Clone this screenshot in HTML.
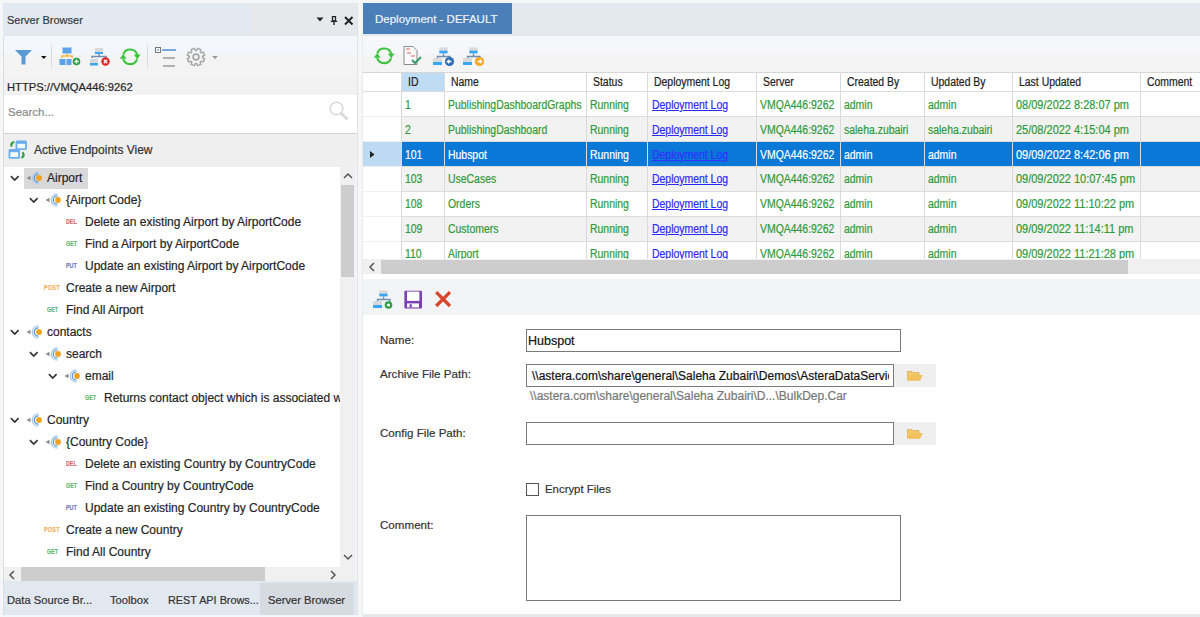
<!DOCTYPE html><html><head><meta charset="utf-8"><style>
*{box-sizing:border-box;margin:0;padding:0}
html,body{width:1200px;height:617px;overflow:hidden;background:#f5f6f7;font-family:"Liberation Sans",sans-serif;color:#262626;position:relative}
.a{position:absolute}
.t{position:absolute;white-space:nowrap;line-height:14px;-webkit-text-stroke:0.2px currentColor}
svg{position:absolute;overflow:visible}
</style></head><body><div class="a" style="left:3px;top:3px;width:354px;height:612px;background:#f3f5f8;"></div>
<div class="a" style="left:3px;top:3px;width:354px;height:33px;background:#e3e9f0;"></div>
<div class="a" style="left:250px;top:3px;width:107px;height:33px;background:#e6e8ec;"></div>
<div class="t" style="left:7px;top:13px;font-size:11px;color:#3a3a3a;">Server Browser</div>
<svg style="left:316px;top:17px" width="8" height="5"><polygon points="0.5,0.5 7.5,0.5 4,4.5" fill="#222"/></svg>
<svg style="left:330px;top:16px" width="8" height="10"><path d="M2.5,0.6H5.5V5H2.5Z" stroke="#222" stroke-width="1.3" fill="none"/><path d="M0.8,5.4H7.2M4,5.4V9" stroke="#222" stroke-width="1.4" fill="none"/></svg>
<svg style="left:344px;top:16px" width="10" height="10"><path d="M1,1L8.5,8.5M8.5,1L1,8.5" stroke="#222" stroke-width="2" fill="none"/></svg>
<div class="a" style="left:3px;top:36px;width:354px;height:42px;background:linear-gradient(#f3f6fa 0,#f3f6fa 42%,#f4f4f5 42%,#f3f3f4 100%);"></div>
<svg style="left:15px;top:50px" width="18" height="15"><path d="M0,0H17L10.5,6.5V14.5H6.5V6.5Z" fill="#5b9bd5"/></svg>
<svg style="left:41px;top:56px" width="6" height="3"><polygon points="0,0 5.5,0 2.75,3" fill="#111"/></svg>
<div class="a" style="left:51px;top:45px;width:1px;height:23px;background:#d9dde2;"></div>
<svg style="left:59px;top:47px" width="22" height="19">
<rect x="3.5" y="0.5" width="9" height="6" fill="#5ba3e8"/>
<path d="M3,11V9H13V11M8,6.5V9" stroke="#f2b63c" stroke-width="1.6" fill="none"/>
<rect x="0.5" y="12" width="6" height="6" fill="#5ba3e8"/><rect x="7.5" y="12" width="5" height="6" fill="#5ba3e8"/>
<circle cx="17.5" cy="14.5" r="3.8" fill="#2ea043"/><path d="M15.5,14.5H19.5M17.5,12.5V16.5" stroke="#fff" stroke-width="1.3"/>
</svg>
<svg style="left:89px;top:47px" width="22" height="20">
<rect x="6" y="1" width="8" height="4" fill="#d8d8d8"/><rect x="6" y="5" width="8" height="2" fill="#3ba7f0"/>
<path d="M10,7V9.5M3,11V9.5H17V11" stroke="#6f8fb0" stroke-width="1.4" fill="none"/>
<rect x="1" y="12" width="8" height="4" fill="#d8d8d8"/><rect x="1" y="16" width="8" height="2.5" fill="#3ba7f0"/>
<circle cx="16.5" cy="14.5" r="4.2" fill="#e02424"/><path d="M14.8,12.8L18.2,16.2M18.2,12.8L14.8,16.2" stroke="#fff" stroke-width="1.3"/>
</svg>
<svg style="left:120px;top:48px" width="21" height="18"><path d="M3.34,6.3A7.3,7.3 0 0 1 17.25,6.91" stroke="#3ec43e" stroke-width="2.1" fill="none"/><path d="M17.06,11.3A7.3,7.3 0 0 1 3.15,10.69" stroke="#3ec43e" stroke-width="2.1" fill="none"/>
<polygon points="13.8,6.6 20.6,6.6 17.2,11.4" fill="#3ec43e"/><polygon points="-0.2,10.8 6.6,10.8 3.2,6" fill="#3ec43e"/></svg>
<div class="a" style="left:147px;top:45px;width:1px;height:23px;background:#d9dde2;"></div>
<svg style="left:155px;top:47px" width="22" height="20">
<rect x="0.5" y="0.5" width="5" height="5" fill="#fff" stroke="#777" stroke-width="1"/><path d="M2,3H4" stroke="#3a7fd0" stroke-width="1"/>
<path d="M7,3H21" stroke="#3a7fd0" stroke-width="1.3"/><path d="M8,11H20M8,19H20" stroke="#9a9a9a" stroke-width="1.3"/>
</svg>
<svg style="left:186px;top:47px" width="20" height="20" viewBox="-10 -10 20 20">
<path d="M6.31,-1.93L8.64,-1.68L8.64,1.68L6.31,1.93L5.83,3.10L7.30,4.92L4.92,7.30L3.10,5.83L1.93,6.31L1.68,8.64L-1.68,8.64L-1.93,6.31L-3.10,5.83L-4.92,7.30L-7.30,4.92L-5.83,3.10L-6.31,1.93L-8.64,1.68L-8.64,-1.68L-6.31,-1.93L-5.83,-3.10L-7.30,-4.92L-4.92,-7.30L-3.10,-5.83L-1.93,-6.31L-1.68,-8.64L1.68,-8.64L1.93,-6.31L3.10,-5.83L4.92,-7.30L7.30,-4.92L5.83,-3.10Z" fill="none" stroke="#a6a6a6" stroke-width="1.5" stroke-linejoin="round" transform="rotate(22.5)"/>
<circle cx="0" cy="0" r="2.9" fill="none" stroke="#a6a6a6" stroke-width="1.7"/></svg>
<svg style="left:212px;top:56px" width="7" height="3"><polygon points="0,0 6,0 3,3" fill="#999"/></svg>
<div class="a" style="left:3px;top:78px;width:354px;height:17px;background:#f2f2f3;"></div>
<div class="t" style="left:7px;top:80px;font-size:11.2px;color:#262626;">HTTPS://VMQA446:9262</div>
<div class="a" style="left:3px;top:95px;width:354px;height:38px;background:#fff;"></div>
<div class="a" style="left:3px;top:133px;width:354px;height:1px;background:#d2d2d2;"></div>
<div class="t" style="left:8px;top:105px;font-size:11.5px;color:#8a8a8a;">Search...</div>
<svg style="left:328px;top:100px" width="22" height="22"><circle cx="8.5" cy="8.5" r="6.3" fill="none" stroke="#d8d8d8" stroke-width="1.6"/><path d="M13,13L19.5,19.5" stroke="#d8d8d8" stroke-width="2.8"/></svg>
<div class="a" style="left:3px;top:134px;width:354px;height:33px;background:#efefef;"></div>
<svg style="left:8px;top:140px" width="20" height="20">
<rect x="7.6" y="0.6" width="11.4" height="9.5" rx="1.6" fill="#6aaef0"/><rect x="9.4" y="3.8" width="7.8" height="4.5" fill="#f4f8fc"/>
<rect x="0.6" y="9" width="11.4" height="9.8" rx="1.6" fill="#6aaef0"/><rect x="2.4" y="12.2" width="7.8" height="4.8" fill="#f4f8fc"/>
<path d="M5.5,2.2Q2.6,3.2 3.4,5.8" stroke="#3a9e4a" stroke-width="2.2" fill="none" stroke-linecap="round"/>
<path d="M15,13Q16.6,15.6 14.2,17.4" stroke="#3a9e4a" stroke-width="2.2" fill="none" stroke-linecap="round"/>
</svg>
<div class="t" style="left:34px;top:143px;font-size:12px;color:#333;">Active Endpoints View</div>
<div class="a" style="left:3px;top:167px;width:337px;height:400px;background:#fff;"></div>
<div class="a" style="left:3px;top:167px;width:337px;height:400px;overflow:hidden">
<div class="a" style="left:21px;top:1px;width:64px;height:21px;background:#d9d9d9"></div>
<svg style="left:7px;top:8px" width="10" height="7"><path d="M0.9,1.2L4.75,5L8.6,1.2" stroke="#333" stroke-width="1.7" fill="none"/></svg>
<svg style="left:23px;top:4px" width="17" height="14"><polygon points="0.5,7 4.5,4.8 4.5,9.2" fill="#8a8a8a"/>
<path d="M12.5,0.8A6.2,6.2 0 0 0 12.5,13.2" stroke="#a9c9ec" stroke-width="1.3" fill="none"/>
<path d="M12.5,2.8A4.2,4.2 0 0 0 12.5,11.2" stroke="#5b98d8" stroke-width="1.3" fill="none"/>
<circle cx="13" cy="7" r="2.9" fill="#f0a21e"/></svg>
<div class="t" style="left:44px;top:4px;font-size:12px;color:#262626">Airport</div>
<svg style="left:26px;top:30px" width="10" height="7"><path d="M0.9,1.2L4.75,5L8.6,1.2" stroke="#333" stroke-width="1.7" fill="none"/></svg>
<svg style="left:42px;top:26px" width="17" height="14"><polygon points="0.5,7 4.5,4.8 4.5,9.2" fill="#8a8a8a"/>
<path d="M12.5,0.8A6.2,6.2 0 0 0 12.5,13.2" stroke="#a9c9ec" stroke-width="1.3" fill="none"/>
<path d="M12.5,2.8A4.2,4.2 0 0 0 12.5,11.2" stroke="#5b98d8" stroke-width="1.3" fill="none"/>
<circle cx="13" cy="7" r="2.9" fill="#f0a21e"/></svg>
<div class="t" style="left:63px;top:26px;font-size:12px;color:#262626">{Airport Code}</div>
<div class="t" style="left:63px;top:51px;font-size:7px;line-height:7px;font-weight:bold;color:#d2404a;opacity:0.8;letter-spacing:0px;transform:scaleX(0.76);transform-origin:0 0">DEL</div>
<div class="t" style="left:82px;top:48px;font-size:12px;color:#262626">Delete an existing Airport by AirportCode</div>
<div class="t" style="left:63px;top:73px;font-size:7px;line-height:7px;font-weight:bold;color:#3ea64a;opacity:0.8;letter-spacing:0px;transform:scaleX(0.76);transform-origin:0 0">GET</div>
<div class="t" style="left:82px;top:70px;font-size:12px;color:#262626">Find a Airport by AirportCode</div>
<div class="t" style="left:63px;top:95px;font-size:7px;line-height:7px;font-weight:bold;color:#4a58b0;opacity:0.8;letter-spacing:0px;transform:scaleX(0.76);transform-origin:0 0">PUT</div>
<div class="t" style="left:82px;top:92px;font-size:12px;color:#262626">Update an existing Airport by AirportCode</div>
<div class="t" style="left:41px;top:117px;font-size:7px;line-height:7px;font-weight:bold;color:#f09a30;opacity:0.8;letter-spacing:0.4px;transform:scaleX(0.76);transform-origin:0 0">POST</div>
<div class="t" style="left:63px;top:114px;font-size:12px;color:#262626">Create a new Airport</div>
<div class="t" style="left:44px;top:139px;font-size:7px;line-height:7px;font-weight:bold;color:#3ea64a;opacity:0.8;letter-spacing:0px;transform:scaleX(0.76);transform-origin:0 0">GET</div>
<div class="t" style="left:63px;top:136px;font-size:12px;color:#262626">Find All Airport</div>
<svg style="left:7px;top:162px" width="10" height="7"><path d="M0.9,1.2L4.75,5L8.6,1.2" stroke="#333" stroke-width="1.7" fill="none"/></svg>
<svg style="left:23px;top:158px" width="17" height="14"><polygon points="0.5,7 4.5,4.8 4.5,9.2" fill="#8a8a8a"/>
<path d="M12.5,0.8A6.2,6.2 0 0 0 12.5,13.2" stroke="#a9c9ec" stroke-width="1.3" fill="none"/>
<path d="M12.5,2.8A4.2,4.2 0 0 0 12.5,11.2" stroke="#5b98d8" stroke-width="1.3" fill="none"/>
<circle cx="13" cy="7" r="2.9" fill="#f0a21e"/></svg>
<div class="t" style="left:44px;top:158px;font-size:12px;color:#262626">contacts</div>
<svg style="left:26px;top:184px" width="10" height="7"><path d="M0.9,1.2L4.75,5L8.6,1.2" stroke="#333" stroke-width="1.7" fill="none"/></svg>
<svg style="left:42px;top:180px" width="17" height="14"><polygon points="0.5,7 4.5,4.8 4.5,9.2" fill="#8a8a8a"/>
<path d="M12.5,0.8A6.2,6.2 0 0 0 12.5,13.2" stroke="#a9c9ec" stroke-width="1.3" fill="none"/>
<path d="M12.5,2.8A4.2,4.2 0 0 0 12.5,11.2" stroke="#5b98d8" stroke-width="1.3" fill="none"/>
<circle cx="13" cy="7" r="2.9" fill="#f0a21e"/></svg>
<div class="t" style="left:63px;top:180px;font-size:12px;color:#262626">search</div>
<svg style="left:45px;top:206px" width="10" height="7"><path d="M0.9,1.2L4.75,5L8.6,1.2" stroke="#333" stroke-width="1.7" fill="none"/></svg>
<svg style="left:61px;top:202px" width="17" height="14"><polygon points="0.5,7 4.5,4.8 4.5,9.2" fill="#8a8a8a"/>
<path d="M12.5,0.8A6.2,6.2 0 0 0 12.5,13.2" stroke="#a9c9ec" stroke-width="1.3" fill="none"/>
<path d="M12.5,2.8A4.2,4.2 0 0 0 12.5,11.2" stroke="#5b98d8" stroke-width="1.3" fill="none"/>
<circle cx="13" cy="7" r="2.9" fill="#f0a21e"/></svg>
<div class="t" style="left:82px;top:202px;font-size:12px;color:#262626">email</div>
<div class="t" style="left:82px;top:227px;font-size:7px;line-height:7px;font-weight:bold;color:#3ea64a;opacity:0.8;letter-spacing:0px;transform:scaleX(0.76);transform-origin:0 0">GET</div>
<div class="t" style="left:101px;top:224px;font-size:12px;color:#262626">Returns contact object which is associated with the email</div>
<svg style="left:7px;top:250px" width="10" height="7"><path d="M0.9,1.2L4.75,5L8.6,1.2" stroke="#333" stroke-width="1.7" fill="none"/></svg>
<svg style="left:23px;top:246px" width="17" height="14"><polygon points="0.5,7 4.5,4.8 4.5,9.2" fill="#8a8a8a"/>
<path d="M12.5,0.8A6.2,6.2 0 0 0 12.5,13.2" stroke="#a9c9ec" stroke-width="1.3" fill="none"/>
<path d="M12.5,2.8A4.2,4.2 0 0 0 12.5,11.2" stroke="#5b98d8" stroke-width="1.3" fill="none"/>
<circle cx="13" cy="7" r="2.9" fill="#f0a21e"/></svg>
<div class="t" style="left:44px;top:246px;font-size:12px;color:#262626">Country</div>
<svg style="left:26px;top:272px" width="10" height="7"><path d="M0.9,1.2L4.75,5L8.6,1.2" stroke="#333" stroke-width="1.7" fill="none"/></svg>
<svg style="left:42px;top:268px" width="17" height="14"><polygon points="0.5,7 4.5,4.8 4.5,9.2" fill="#8a8a8a"/>
<path d="M12.5,0.8A6.2,6.2 0 0 0 12.5,13.2" stroke="#a9c9ec" stroke-width="1.3" fill="none"/>
<path d="M12.5,2.8A4.2,4.2 0 0 0 12.5,11.2" stroke="#5b98d8" stroke-width="1.3" fill="none"/>
<circle cx="13" cy="7" r="2.9" fill="#f0a21e"/></svg>
<div class="t" style="left:63px;top:268px;font-size:12px;color:#262626">{Country Code}</div>
<div class="t" style="left:63px;top:293px;font-size:7px;line-height:7px;font-weight:bold;color:#d2404a;opacity:0.8;letter-spacing:0px;transform:scaleX(0.76);transform-origin:0 0">DEL</div>
<div class="t" style="left:82px;top:290px;font-size:12px;color:#262626">Delete an existing Country by CountryCode</div>
<div class="t" style="left:63px;top:315px;font-size:7px;line-height:7px;font-weight:bold;color:#3ea64a;opacity:0.8;letter-spacing:0px;transform:scaleX(0.76);transform-origin:0 0">GET</div>
<div class="t" style="left:82px;top:312px;font-size:12px;color:#262626">Find a Country by CountryCode</div>
<div class="t" style="left:63px;top:337px;font-size:7px;line-height:7px;font-weight:bold;color:#4a58b0;opacity:0.8;letter-spacing:0px;transform:scaleX(0.76);transform-origin:0 0">PUT</div>
<div class="t" style="left:82px;top:334px;font-size:12px;color:#262626">Update an existing Country by CountryCode</div>
<div class="t" style="left:41px;top:359px;font-size:7px;line-height:7px;font-weight:bold;color:#f09a30;opacity:0.8;letter-spacing:0.4px;transform:scaleX(0.76);transform-origin:0 0">POST</div>
<div class="t" style="left:63px;top:356px;font-size:12px;color:#262626">Create a new Country</div>
<div class="t" style="left:44px;top:381px;font-size:7px;line-height:7px;font-weight:bold;color:#3ea64a;opacity:0.8;letter-spacing:0px;transform:scaleX(0.76);transform-origin:0 0">GET</div>
<div class="t" style="left:63px;top:378px;font-size:12px;color:#262626">Find All Country</div>
</div>
<div class="a" style="left:340px;top:167px;width:15px;height:400px;background:#f0f0f0;"></div>
<div class="a" style="left:341px;top:185px;width:13px;height:92px;background:#cdcdcd;"></div>
<svg style="left:343px;top:173px" width="10" height="6"><path d="M1,5L5,1L9,5" stroke="#555" stroke-width="1.5" fill="none"/></svg>
<svg style="left:343px;top:554px" width="10" height="6"><path d="M1,1L5,5L9,1" stroke="#555" stroke-width="1.5" fill="none"/></svg>
<div class="a" style="left:3px;top:567px;width:352px;height:14px;background:#f0f0f0;"></div>
<div class="a" style="left:21px;top:567px;width:244px;height:14px;background:#cdcdcd;"></div>
<svg style="left:9px;top:570px" width="6" height="10"><path d="M5,1L1,5L5,9" stroke="#555" stroke-width="1.5" fill="none"/></svg>
<svg style="left:330px;top:570px" width="6" height="10"><path d="M1,1L5,5L1,9" stroke="#555" stroke-width="1.5" fill="none"/></svg>
<div class="a" style="left:3px;top:581px;width:354px;height:34px;background:#e2e8ef;"></div>
<div class="a" style="left:260px;top:583px;width:94px;height:32px;background:#d6dbe1;"></div>
<div class="t" style="left:7px;top:593px;font-size:11.2px;color:#333;">Data Source Br...</div>
<div class="t" style="left:110px;top:593px;font-size:11.2px;color:#333;">Toolbox</div>
<div class="t" style="left:168px;top:593px;font-size:10.85px;color:#333;">REST API Brows...</div>
<div class="t" style="left:268px;top:593px;font-size:11.2px;color:#333;">Server Browser</div>
<div class="a" style="left:3px;top:36px;width:1px;height:579px;background:#dcdde0;"></div>
<div class="a" style="left:357px;top:3px;width:1px;height:612px;background:#e2e4e7;"></div>
<div class="a" style="left:362px;top:36px;width:1px;height:579px;background:#e8eaed;"></div>
<div class="a" style="left:363px;top:3px;width:837px;height:612px;background:#fff;"></div>
<div class="a" style="left:363px;top:3px;width:837px;height:33px;background:#e4e9f0;"></div>
<div class="a" style="left:363px;top:3px;width:149px;height:31px;background:#4a7fb9;"></div>
<div class="t" style="left:375px;top:12px;font-size:11.5px;color:#eef3f9;">Deployment - DEFAULT</div>
<div class="a" style="left:363px;top:36px;width:837px;height:36px;background:linear-gradient(#f5f7fa 0,#f5f7fa 50%,#f4f4f5 50%,#f4f4f5 100%);"></div>
<svg style="left:374px;top:47px" width="21" height="18"><path d="M3.34,6.3A7.3,7.3 0 0 1 17.25,6.91" stroke="#3ec43e" stroke-width="2.1" fill="none"/><path d="M17.06,11.3A7.3,7.3 0 0 1 3.15,10.69" stroke="#3ec43e" stroke-width="2.1" fill="none"/>
<polygon points="13.8,6.6 20.6,6.6 17.2,11.4" fill="#3ec43e"/><polygon points="-0.2,10.8 6.6,10.8 3.2,6" fill="#3ec43e"/></svg>
<svg style="left:403px;top:46px" width="20" height="20">
<path d="M1,0.5H10L14,4.5V18.5H1Z" fill="#fafafa" stroke="#8a8a8a" stroke-width="1"/><path d="M3,3H7M4,7H8M8,10H12" stroke="#e06050" stroke-width="1"/>
<path d="M9,14L12,17L18,11" stroke="#3a9a6a" stroke-width="2" fill="none"/></svg>
<svg style="left:433px;top:47px" width="20" height="20"><rect x="6.3" y="0.4" width="8.3" height="3.2" fill="#d9d9d9"/><rect x="6.3" y="3.6" width="8.3" height="2.8" fill="#3aa6f2"/>
<path d="M10.5,6.4V9.5M4.5,11V9.5H17V12" stroke="#6f8fb0" stroke-width="1.4" fill="none"/>
<rect x="0" y="11" width="9" height="4" fill="#d9d9d9"/><rect x="0" y="15" width="9" height="3" fill="#3aa6f2"/><circle cx="16.5" cy="14.5" r="4.6" fill="#2f6db5"/><path d="M18.5,14.5H14.5M16.2,12.7L14.4,14.5L16.2,16.3" stroke="#fff" stroke-width="1.3" fill="none"/></svg>
<svg style="left:463px;top:47px" width="20" height="20"><rect x="6.3" y="0.4" width="8.3" height="3.2" fill="#d9d9d9"/><rect x="6.3" y="3.6" width="8.3" height="2.8" fill="#3aa6f2"/>
<path d="M10.5,6.4V9.5M4.5,11V9.5H17V12" stroke="#6f8fb0" stroke-width="1.4" fill="none"/>
<rect x="0" y="11" width="9" height="4" fill="#d9d9d9"/><rect x="0" y="15" width="9" height="3" fill="#3aa6f2"/><circle cx="16.5" cy="14.5" r="4.6" fill="#f5a623"/><path d="M14.5,14.5H18.5M16.8,12.7L18.6,14.5L16.8,16.3" stroke="#fff" stroke-width="1.3" fill="none"/></svg>
<div class="a" style="left:363px;top:72px;width:837px;height:187px;overflow:hidden;background:#fff">
<div class="a" style="left:0px;top:0px;width:837px;height:1px;background:#d6d6d6;"></div>
<div class="a" style="left:38px;top:1px;width:43px;height:18px;background:#bfdcf5;"></div>
<div class="a" style="left:38px;top:44px;width:837px;height:1px;background:#dcdcdc;"></div>
<div class="a" style="left:0px;top:44px;width:38px;height:1px;background:#f0f0f0;"></div>
<div class="a" style="left:38px;top:45px;width:837px;height:25px;background:#f2f2f2;"></div>
<div class="a" style="left:38px;top:69px;width:837px;height:1px;background:#dcdcdc;"></div>
<div class="a" style="left:0px;top:69px;width:38px;height:1px;background:#f0f0f0;"></div>
<div class="a" style="left:38px;top:70px;width:837px;height:25px;background:#0a78d7;"></div>
<div class="a" style="left:0px;top:70px;width:38px;height:25px;background:#bcdaf3;"></div>
<div class="a" style="left:38px;top:94px;width:837px;height:1px;background:#dcdcdc;"></div>
<div class="a" style="left:0px;top:94px;width:38px;height:1px;background:#f0f0f0;"></div>
<div class="a" style="left:38px;top:95px;width:837px;height:25px;background:#f2f2f2;"></div>
<div class="a" style="left:38px;top:119px;width:837px;height:1px;background:#dcdcdc;"></div>
<div class="a" style="left:0px;top:119px;width:38px;height:1px;background:#f0f0f0;"></div>
<div class="a" style="left:38px;top:144px;width:837px;height:1px;background:#dcdcdc;"></div>
<div class="a" style="left:0px;top:144px;width:38px;height:1px;background:#f0f0f0;"></div>
<div class="a" style="left:38px;top:145px;width:837px;height:25px;background:#f2f2f2;"></div>
<div class="a" style="left:38px;top:169px;width:837px;height:1px;background:#dcdcdc;"></div>
<div class="a" style="left:0px;top:169px;width:38px;height:1px;background:#f0f0f0;"></div>
<div class="a" style="left:38px;top:194px;width:837px;height:1px;background:#dcdcdc;"></div>
<div class="a" style="left:0px;top:194px;width:38px;height:1px;background:#f0f0f0;"></div>
<div class="a" style="left:0px;top:19px;width:837px;height:1px;background:#dcdcdc;"></div>
<div class="a" style="left:38px;top:0px;width:1px;height:187px;background:#dadada;"></div>
<div class="a" style="left:81px;top:0px;width:1px;height:187px;background:#dadada;"></div>
<div class="a" style="left:223px;top:0px;width:1px;height:187px;background:#dadada;"></div>
<div class="a" style="left:284px;top:0px;width:1px;height:187px;background:#dadada;"></div>
<div class="a" style="left:393px;top:0px;width:1px;height:187px;background:#dadada;"></div>
<div class="a" style="left:477px;top:0px;width:1px;height:187px;background:#dadada;"></div>
<div class="a" style="left:561px;top:0px;width:1px;height:187px;background:#dadada;"></div>
<div class="a" style="left:649px;top:0px;width:1px;height:187px;background:#dadada;"></div>
<div class="a" style="left:777px;top:0px;width:1px;height:187px;background:#dadada;"></div>
<div class="t" style="left:45px;top:3px;font-size:12px;color:#222;transform:scaleX(0.87);transform-origin:0 0">ID</div>
<div class="t" style="left:88px;top:3px;font-size:12px;color:#222;transform:scaleX(0.87);transform-origin:0 0">Name</div>
<div class="t" style="left:230px;top:3px;font-size:12px;color:#222;transform:scaleX(0.87);transform-origin:0 0">Status</div>
<div class="t" style="left:291px;top:3px;font-size:12px;color:#222;transform:scaleX(0.87);transform-origin:0 0">Deployment Log</div>
<div class="t" style="left:400px;top:3px;font-size:12px;color:#222;transform:scaleX(0.87);transform-origin:0 0">Server</div>
<div class="t" style="left:484px;top:3px;font-size:12px;color:#222;transform:scaleX(0.87);transform-origin:0 0">Created By</div>
<div class="t" style="left:568px;top:3px;font-size:12px;color:#222;transform:scaleX(0.87);transform-origin:0 0">Updated By</div>
<div class="t" style="left:656px;top:3px;font-size:12px;color:#222;transform:scaleX(0.87);transform-origin:0 0">Last Updated</div>
<div class="t" style="left:784px;top:3px;font-size:12px;color:#222;transform:scaleX(0.87);transform-origin:0 0">Comment</div>
<div class="t" style="left:42px;top:26px;font-size:12px;color:#2e9a3a;transform:scaleX(0.87);transform-origin:0 0">1</div>
<div class="t" style="left:85px;top:26px;font-size:12px;color:#2e9a3a;transform:scaleX(0.87);transform-origin:0 0">PublishingDashboardGraphs</div>
<div class="t" style="left:227px;top:26px;font-size:12px;color:#2e9a3a;transform:scaleX(0.87);transform-origin:0 0">Running</div>
<div class="t" style="left:289px;top:26px;font-size:12px;color:#2a2aff;transform:scaleX(0.87);transform-origin:0 0"><u>Deployment Log</u></div>
<div class="t" style="left:397px;top:26px;font-size:12px;color:#2e9a3a;transform:scaleX(0.87);transform-origin:0 0">VMQA446:9262</div>
<div class="t" style="left:481px;top:26px;font-size:12px;color:#2e9a3a;transform:scaleX(0.87);transform-origin:0 0">admin</div>
<div class="t" style="left:565px;top:26px;font-size:12px;color:#2e9a3a;transform:scaleX(0.87);transform-origin:0 0">admin</div>
<div class="t" style="left:653px;top:26px;font-size:12px;color:#2e9a3a;transform:scaleX(0.915);transform-origin:0 0">08/09/2022 8:28:07 pm</div>
<div class="t" style="left:42px;top:51px;font-size:12px;color:#2e9a3a;transform:scaleX(0.87);transform-origin:0 0">2</div>
<div class="t" style="left:85px;top:51px;font-size:12px;color:#2e9a3a;transform:scaleX(0.87);transform-origin:0 0">PublishingDashboard</div>
<div class="t" style="left:227px;top:51px;font-size:12px;color:#2e9a3a;transform:scaleX(0.87);transform-origin:0 0">Running</div>
<div class="t" style="left:289px;top:51px;font-size:12px;color:#2a2aff;transform:scaleX(0.87);transform-origin:0 0"><u>Deployment Log</u></div>
<div class="t" style="left:397px;top:51px;font-size:12px;color:#2e9a3a;transform:scaleX(0.87);transform-origin:0 0">VMQA446:9262</div>
<div class="t" style="left:481px;top:51px;font-size:12px;color:#2e9a3a;transform:scaleX(0.87);transform-origin:0 0">saleha.zubairi</div>
<div class="t" style="left:565px;top:51px;font-size:12px;color:#2e9a3a;transform:scaleX(0.87);transform-origin:0 0">saleha.zubairi</div>
<div class="t" style="left:653px;top:51px;font-size:12px;color:#2e9a3a;transform:scaleX(0.915);transform-origin:0 0">25/08/2022 4:15:04 pm</div>
<div class="t" style="left:42px;top:76px;font-size:12px;color:#ffffff;transform:scaleX(0.87);transform-origin:0 0">101</div>
<div class="t" style="left:85px;top:76px;font-size:12px;color:#ffffff;transform:scaleX(0.87);transform-origin:0 0">Hubspot</div>
<div class="t" style="left:227px;top:76px;font-size:12px;color:#ffffff;transform:scaleX(0.87);transform-origin:0 0">Running</div>
<div class="t" style="left:289px;top:76px;font-size:12px;color:#3030ff;transform:scaleX(0.87);transform-origin:0 0"><u>Deployment Log</u></div>
<div class="t" style="left:397px;top:76px;font-size:12px;color:#ffffff;transform:scaleX(0.87);transform-origin:0 0">VMQA446:9262</div>
<div class="t" style="left:481px;top:76px;font-size:12px;color:#ffffff;transform:scaleX(0.87);transform-origin:0 0">admin</div>
<div class="t" style="left:565px;top:76px;font-size:12px;color:#ffffff;transform:scaleX(0.87);transform-origin:0 0">admin</div>
<div class="t" style="left:653px;top:76px;font-size:12px;color:#ffffff;transform:scaleX(0.915);transform-origin:0 0">09/09/2022 8:42:06 pm</div>
<svg style="left:7px;top:79px" width="6" height="8"><polygon points="0,0 4.5,3.5 0,7" fill="#222"/></svg>
<div class="t" style="left:42px;top:100px;font-size:12px;color:#2e9a3a;transform:scaleX(0.87);transform-origin:0 0">103</div>
<div class="t" style="left:85px;top:100px;font-size:12px;color:#2e9a3a;transform:scaleX(0.87);transform-origin:0 0">UseCases</div>
<div class="t" style="left:227px;top:100px;font-size:12px;color:#2e9a3a;transform:scaleX(0.87);transform-origin:0 0">Running</div>
<div class="t" style="left:289px;top:100px;font-size:12px;color:#2a2aff;transform:scaleX(0.87);transform-origin:0 0"><u>Deployment Log</u></div>
<div class="t" style="left:397px;top:100px;font-size:12px;color:#2e9a3a;transform:scaleX(0.87);transform-origin:0 0">VMQA446:9262</div>
<div class="t" style="left:481px;top:100px;font-size:12px;color:#2e9a3a;transform:scaleX(0.87);transform-origin:0 0">admin</div>
<div class="t" style="left:565px;top:100px;font-size:12px;color:#2e9a3a;transform:scaleX(0.87);transform-origin:0 0">admin</div>
<div class="t" style="left:653px;top:100px;font-size:12px;color:#2e9a3a;transform:scaleX(0.915);transform-origin:0 0">09/09/2022 10:07:45 pm</div>
<div class="t" style="left:42px;top:125px;font-size:12px;color:#2e9a3a;transform:scaleX(0.87);transform-origin:0 0">108</div>
<div class="t" style="left:85px;top:125px;font-size:12px;color:#2e9a3a;transform:scaleX(0.87);transform-origin:0 0">Orders</div>
<div class="t" style="left:227px;top:125px;font-size:12px;color:#2e9a3a;transform:scaleX(0.87);transform-origin:0 0">Running</div>
<div class="t" style="left:289px;top:125px;font-size:12px;color:#2a2aff;transform:scaleX(0.87);transform-origin:0 0"><u>Deployment Log</u></div>
<div class="t" style="left:397px;top:125px;font-size:12px;color:#2e9a3a;transform:scaleX(0.87);transform-origin:0 0">VMQA446:9262</div>
<div class="t" style="left:481px;top:125px;font-size:12px;color:#2e9a3a;transform:scaleX(0.87);transform-origin:0 0">admin</div>
<div class="t" style="left:565px;top:125px;font-size:12px;color:#2e9a3a;transform:scaleX(0.87);transform-origin:0 0">admin</div>
<div class="t" style="left:653px;top:125px;font-size:12px;color:#2e9a3a;transform:scaleX(0.915);transform-origin:0 0">09/09/2022 11:10:22 pm</div>
<div class="t" style="left:42px;top:150px;font-size:12px;color:#2e9a3a;transform:scaleX(0.87);transform-origin:0 0">109</div>
<div class="t" style="left:85px;top:150px;font-size:12px;color:#2e9a3a;transform:scaleX(0.87);transform-origin:0 0">Customers</div>
<div class="t" style="left:227px;top:150px;font-size:12px;color:#2e9a3a;transform:scaleX(0.87);transform-origin:0 0">Running</div>
<div class="t" style="left:289px;top:150px;font-size:12px;color:#2a2aff;transform:scaleX(0.87);transform-origin:0 0"><u>Deployment Log</u></div>
<div class="t" style="left:397px;top:150px;font-size:12px;color:#2e9a3a;transform:scaleX(0.87);transform-origin:0 0">VMQA446:9262</div>
<div class="t" style="left:481px;top:150px;font-size:12px;color:#2e9a3a;transform:scaleX(0.87);transform-origin:0 0">admin</div>
<div class="t" style="left:565px;top:150px;font-size:12px;color:#2e9a3a;transform:scaleX(0.87);transform-origin:0 0">admin</div>
<div class="t" style="left:653px;top:150px;font-size:12px;color:#2e9a3a;transform:scaleX(0.915);transform-origin:0 0">09/09/2022 11:14:11 pm</div>
<div class="t" style="left:42px;top:175px;font-size:12px;color:#2e9a3a;transform:scaleX(0.87);transform-origin:0 0">110</div>
<div class="t" style="left:85px;top:175px;font-size:12px;color:#2e9a3a;transform:scaleX(0.87);transform-origin:0 0">Airport</div>
<div class="t" style="left:227px;top:175px;font-size:12px;color:#2e9a3a;transform:scaleX(0.87);transform-origin:0 0">Running</div>
<div class="t" style="left:289px;top:175px;font-size:12px;color:#2a2aff;transform:scaleX(0.87);transform-origin:0 0"><u>Deployment Log</u></div>
<div class="t" style="left:397px;top:175px;font-size:12px;color:#2e9a3a;transform:scaleX(0.87);transform-origin:0 0">VMQA446:9262</div>
<div class="t" style="left:481px;top:175px;font-size:12px;color:#2e9a3a;transform:scaleX(0.87);transform-origin:0 0">admin</div>
<div class="t" style="left:565px;top:175px;font-size:12px;color:#2e9a3a;transform:scaleX(0.87);transform-origin:0 0">admin</div>
<div class="t" style="left:653px;top:175px;font-size:12px;color:#2e9a3a;transform:scaleX(0.915);transform-origin:0 0">09/09/2022 11:21:28 pm</div>
</div>
<div class="a" style="left:363px;top:259px;width:837px;height:15px;background:#f0f0f0;"></div>
<div class="a" style="left:381px;top:260px;width:747px;height:14px;background:#cdcdcd;"></div>
<svg style="left:369px;top:262px" width="6" height="10"><path d="M5,1L1,5L5,9" stroke="#555" stroke-width="1.5" fill="none"/></svg>
<div class="a" style="left:363px;top:279px;width:837px;height:36px;background:#f3f4f6;"></div>
<svg style="left:373px;top:290px" width="22" height="20"><rect x="6.3" y="0.4" width="8.3" height="3.2" fill="#d9d9d9"/><rect x="6.3" y="3.6" width="8.3" height="2.8" fill="#3aa6f2"/>
<path d="M10.5,6.4V9.5M4.5,11V9.5H17V12" stroke="#6f8fb0" stroke-width="1.4" fill="none"/>
<rect x="0" y="11" width="9" height="4" fill="#d9d9d9"/><rect x="0" y="15" width="9" height="3" fill="#3aa6f2"/><circle cx="15.5" cy="15" r="3.8" fill="#2ea043"/><circle cx="15.5" cy="15" r="1.6" fill="#fff"/></svg>
<svg style="left:404px;top:290px" width="19" height="19"><rect x="0.4" y="0.7" width="17.6" height="17.7" rx="1" fill="#7a3fb2"/><rect x="3" y="1.6" width="12.4" height="9.3" fill="#fff"/><rect x="3" y="13.4" width="12" height="4" fill="#fff"/><rect x="5.6" y="14.2" width="2.2" height="3.2" fill="#7a3fb2"/></svg>
<svg style="left:434px;top:290px" width="19" height="19"><path d="M2.2,2.2L16,16M16,2.2L2.2,16" stroke="#d9452a" stroke-width="3.2"/></svg>
<div class="t" style="left:380px;top:333px;font-size:11.6px;color:#333;">Name:</div>
<div class="a" style="left:526px;top:329px;width:375px;height:23px;background:#fff;border:1px solid #7a7a7a"></div>
<div class="t" style="left:528px;top:334px;font-size:12.5px;color:#111;">Hubspot</div>
<div class="t" style="left:380px;top:367px;font-size:11.6px;color:#333;">Archive File Path:</div>
<div class="a" style="left:526px;top:364px;width:368px;height:23px;background:#fff;border:1px solid #7a7a7a"></div>
<div class="a" style="left:527px;top:365px;width:362px;height:21px;overflow:hidden"><div class="t" style="left:5px;top:4px;font-size:12px;color:#111">\\astera.com\share\general\Saleha Zubairi\Demos\AsteraDataServices</div></div>
<div class="t" style="left:530px;top:389px;font-size:12px;color:#777;">\\astera.com\share\general\Saleha Zubairi\D...\BulkDep.Car</div>
<div class="a" style="left:894px;top:364px;width:42px;height:23px;background:#efefef;"></div>
<svg style="left:907px;top:370px" width="16" height="12"><path d="M0.5,2.5V10.5H13L15.5,5H3.5L0.5,10.5" fill="#e6b04a"/><path d="M0.5,10V1.5H5L6,2.5H12V5" fill="#f4c96a" stroke="#d9a040" stroke-width="0.6"/><path d="M3.5,5H15.5L13,10.5H0.5Z" fill="#f2c15c"/></svg>
<div class="t" style="left:380px;top:426px;font-size:11.6px;color:#333;">Config File Path:</div>
<div class="a" style="left:526px;top:422px;width:368px;height:23px;background:#fff;border:1px solid #7a7a7a"></div>
<div class="a" style="left:894px;top:422px;width:42px;height:23px;background:#efefef;"></div>
<svg style="left:907px;top:428px" width="16" height="12"><path d="M0.5,2.5V10.5H13L15.5,5H3.5L0.5,10.5" fill="#e6b04a"/><path d="M0.5,10V1.5H5L6,2.5H12V5" fill="#f4c96a" stroke="#d9a040" stroke-width="0.6"/><path d="M3.5,5H15.5L13,10.5H0.5Z" fill="#f2c15c"/></svg>
<div class="a" style="left:526px;top:483px;width:13px;height:13px;background:#fff;border:1px solid #555"></div>
<div class="t" style="left:545px;top:482px;font-size:11.4px;color:#333;">Encrypt Files</div>
<div class="t" style="left:380px;top:518px;font-size:11.6px;color:#333;">Comment:</div>
<div class="a" style="left:526px;top:515px;width:375px;height:86px;background:#fff;border:1px solid #7a7a7a"></div>
<div class="a" style="left:363px;top:614px;width:837px;height:3px;background:#e6e7ea;"></div></body></html>
